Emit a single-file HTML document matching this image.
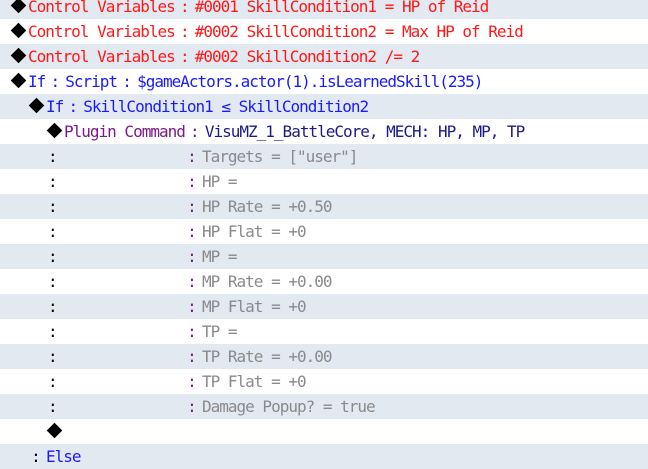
<!DOCTYPE html>
<html><head><meta charset="utf-8"><style>
body{margin:0;width:648px;height:468px;overflow:hidden;background:#fff;position:relative;font-family:"DejaVu Sans Mono","Liberation Mono",monospace;font-size:16px;letter-spacing:-1px}
.r{position:absolute;left:0;width:648px;height:25px;line-height:25px;white-space:pre}
.g{background:#e3e9f0}
.t{position:absolute;top:0}
.c{display:inline-block;width:20px;text-align:center;letter-spacing:0}
.red{color:#ff1818}.blue{color:#1a1aff}.pur{color:#7a1a8a}.dk{color:#1a1a8a}.gr{color:#8a8a8a}
.d{display:inline-block;width:18px;height:25px;position:relative;vertical-align:top}
.d:after{content:"";position:absolute;left:3px;top:6px;width:11px;height:11px;background:#000;transform:rotate(45deg)}
</style></head><body>
<div class="r g" style="top:-6px"><span class="t red" style="left:10px"><span class="d"></span>Control Variables<span class="c">:</span>#0001 SkillCondition1 = HP of Reid</span></div>
<div class="r" style="top:19px"><span class="t red" style="left:10px"><span class="d"></span>Control Variables<span class="c">:</span>#0002 SkillCondition2 = Max HP of Reid</span></div>
<div class="r g" style="top:44px"><span class="t red" style="left:10px"><span class="d"></span>Control Variables<span class="c">:</span>#0002 SkillCondition2 /= 2</span></div>
<div class="r" style="top:69px"><span class="t blue" style="left:10px"><span class="d"></span>If<span class="c">:</span>Script<span class="c">:</span>$gameActors.actor(1).isLearnedSkill(235)</span></div>
<div class="r g" style="top:94px"><span class="t blue" style="left:28px"><span class="d"></span>If<span class="c">:</span>SkillCondition1 ≤ SkillCondition2</span></div>
<div class="r" style="top:119px"><span class="t pur" style="left:46px"><span class="d"></span>Plugin Command<span class="c">:</span><span class="dk">VisuMZ_1_BattleCore, MECH: HP, MP, TP</span></span></div>
<div class="r g" style="top:144px"><span class="t" style="left:48px">:</span><span class="t pur" style="left:182px"><span class="c">:</span><span class="gr">Targets = ["user"]</span></span></div>
<div class="r" style="top:169px"><span class="t" style="left:48px">:</span><span class="t pur" style="left:182px"><span class="c">:</span><span class="gr">HP =</span></span></div>
<div class="r g" style="top:194px"><span class="t" style="left:48px">:</span><span class="t pur" style="left:182px"><span class="c">:</span><span class="gr">HP Rate = +0.50</span></span></div>
<div class="r" style="top:219px"><span class="t" style="left:48px">:</span><span class="t pur" style="left:182px"><span class="c">:</span><span class="gr">HP Flat = +0</span></span></div>
<div class="r g" style="top:244px"><span class="t" style="left:48px">:</span><span class="t pur" style="left:182px"><span class="c">:</span><span class="gr">MP =</span></span></div>
<div class="r" style="top:269px"><span class="t" style="left:48px">:</span><span class="t pur" style="left:182px"><span class="c">:</span><span class="gr">MP Rate = +0.00</span></span></div>
<div class="r g" style="top:294px"><span class="t" style="left:48px">:</span><span class="t pur" style="left:182px"><span class="c">:</span><span class="gr">MP Flat = +0</span></span></div>
<div class="r" style="top:319px"><span class="t" style="left:48px">:</span><span class="t pur" style="left:182px"><span class="c">:</span><span class="gr">TP =</span></span></div>
<div class="r g" style="top:344px"><span class="t" style="left:48px">:</span><span class="t pur" style="left:182px"><span class="c">:</span><span class="gr">TP Rate = +0.00</span></span></div>
<div class="r" style="top:369px"><span class="t" style="left:48px">:</span><span class="t pur" style="left:182px"><span class="c">:</span><span class="gr">TP Flat = +0</span></span></div>
<div class="r g" style="top:394px"><span class="t" style="left:48px">:</span><span class="t pur" style="left:182px"><span class="c">:</span><span class="gr">Damage Popup? = true</span></span></div>
<div class="r" style="top:419px"><span class="t" style="left:46px"><span class="d"></span></span></div>
<div class="r g" style="top:444px"><span class="t blue" style="left:26px"><span class="c" style="color:#000">:</span>Else</span></div>
</body></html>
